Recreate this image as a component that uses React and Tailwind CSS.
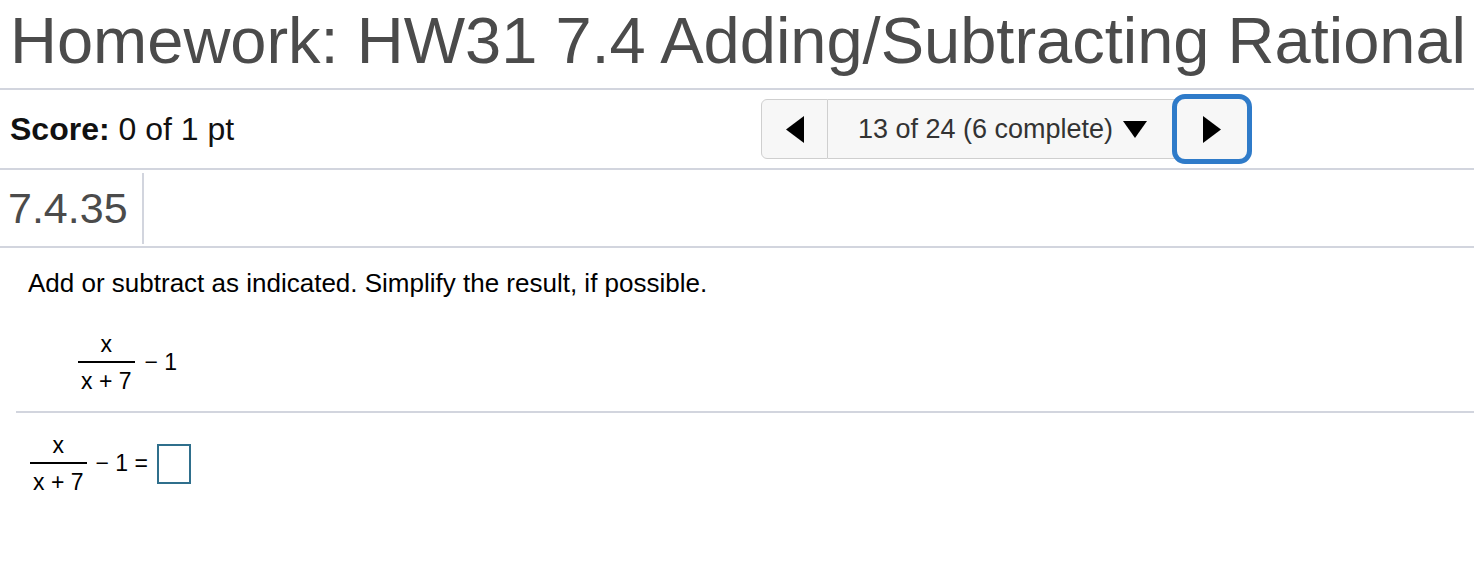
function Divider() {
  return <div className="h-[2px] bg-[#d2d5de]" />
}

function Fraction({ num, den }) {
  return (
    <div className="inline-flex flex-col items-stretch">
      <div className="text-center leading-[24px] mb-[5px]">{num}</div>
      <div className="h-[2px] bg-black" />
      <div className="text-center leading-[24px] mt-[6px] px-[3px]">{den}</div>
    </div>
  )
}

export default function App() {
  return (
    <div className="w-[1474px] h-[582px] overflow-hidden bg-white font-['Liberation_Sans',Arial,sans-serif]">
      {/* Title */}
      <div className="h-[88px] pl-[10px] pt-[8px] text-[65px] leading-none text-[#4b4b4b] whitespace-nowrap overflow-hidden">
        Homework: HW31 7.4 Adding/Subtracting Rational
      </div>
      <Divider />

      {/* Score + navigation */}
      <div className="h-[78px] flex items-center">
        <div className="w-[761px] shrink-0 pl-[10px] text-[32px] text-[#111]">
          <span className="font-bold">Score:</span> 0 of 1 pt
        </div>
        <div className="flex h-[60px]">
          <button className="w-[67px] h-full flex items-center justify-center bg-[#f7f7f7] border-[1.5px] border-[#cfcfcf] rounded-l-md">
            <svg width="18" height="27" viewBox="0 0 18 27"><path d="M18 0 L0 13.5 L18 27 Z" fill="#000" /></svg>
          </button>
          <button className="w-[349px] h-full flex items-center justify-center gap-[10px] bg-[#f7f7f7] border-y-[1.5px] border-[#cfcfcf] text-[27px] text-[#333]">
            <span>13 of 24 (6 complete)</span>
            <svg width="24" height="17" viewBox="0 0 24 17"><path d="M0 0 L24 0 L12 17 Z" fill="#000" /></svg>
          </button>
          <button className="w-[70px] h-full flex items-center justify-center bg-[#f7f7f7] rounded-lg outline-[5px] outline-solid outline-[#2f7bc9]">
            <svg width="18" height="27" viewBox="0 0 18 27"><path d="M0 0 L18 13.5 L0 27 Z" fill="#000" /></svg>
          </button>
        </div>
      </div>
      <Divider />

      {/* Question number */}
      <div className="h-[76px] flex items-center">
        <div className="pl-2 pr-[14px] text-[43px] leading-none text-[#4b4b4b] h-[71px] flex items-center border-r-2 border-[#d2d5de]">
          7.4.35
        </div>
      </div>
      <Divider />

      {/* Question */}
      <div className="pl-4 text-[23px] text-black">
        <div className="pl-3 pt-[21px] text-[26px] leading-[28px]">
          Add or subtract as indicated. Simplify the result, if possible.
        </div>
        <div className="pl-[62px] pt-[35px] pb-[18px] flex items-center">
          <Fraction num="x" den="x + 7" />
          <span className="ml-[10px]">−&nbsp;1</span>
        </div>
        <Divider />
        <div className="pl-[14px] pt-[20px] flex items-center">
          <Fraction num="x" den="x + 7" />
          <span className="ml-[9px]">−&nbsp;1&nbsp;=</span>
          <div className="ml-[9px] w-[34px] h-[40px] border-2 border-[#2f6f8c]" />
        </div>
      </div>
    </div>
  )
}
